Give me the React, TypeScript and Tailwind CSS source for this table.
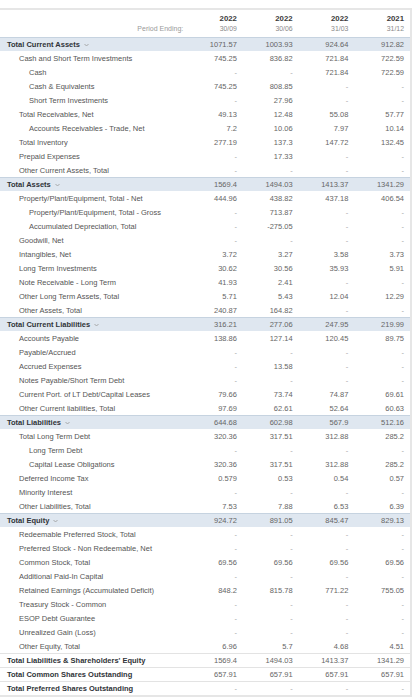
type Row = {
  label: string;
  level: number;
  kind: 'section' | 'item' | 'total';
  values: string[];
};

const D = ['-', '-', '-', '-'];

const rows: Row[] = [
  { label: 'Total Current Assets', level: 0, kind: 'section', values: ['1071.57', '1003.93', '924.64', '912.82'] },
  { label: 'Cash and Short Term Investments', level: 1, kind: 'item', values: ['745.25', '836.82', '721.84', '722.59'] },
  { label: 'Cash', level: 2, kind: 'item', values: ['-', '-', '721.84', '722.59'] },
  { label: 'Cash & Equivalents', level: 2, kind: 'item', values: ['745.25', '808.85', '-', '-'] },
  { label: 'Short Term Investments', level: 2, kind: 'item', values: ['-', '27.96', '-', '-'] },
  { label: 'Total Receivables, Net', level: 1, kind: 'item', values: ['49.13', '12.48', '55.08', '57.77'] },
  { label: 'Accounts Receivables - Trade, Net', level: 2, kind: 'item', values: ['7.2', '10.06', '7.97', '10.14'] },
  { label: 'Total Inventory', level: 1, kind: 'item', values: ['277.19', '137.3', '147.72', '132.45'] },
  { label: 'Prepaid Expenses', level: 1, kind: 'item', values: ['-', '17.33', '-', '-'] },
  { label: 'Other Current Assets, Total', level: 1, kind: 'item', values: D },
  { label: 'Total Assets', level: 0, kind: 'section', values: ['1569.4', '1494.03', '1413.37', '1341.29'] },
  { label: 'Property/Plant/Equipment, Total - Net', level: 1, kind: 'item', values: ['444.96', '438.82', '437.18', '406.54'] },
  { label: 'Property/Plant/Equipment, Total - Gross', level: 2, kind: 'item', values: ['-', '713.87', '-', '-'] },
  { label: 'Accumulated Depreciation, Total', level: 2, kind: 'item', values: ['-', '-275.05', '-', '-'] },
  { label: 'Goodwill, Net', level: 1, kind: 'item', values: D },
  { label: 'Intangibles, Net', level: 1, kind: 'item', values: ['3.72', '3.27', '3.58', '3.73'] },
  { label: 'Long Term Investments', level: 1, kind: 'item', values: ['30.62', '30.56', '35.93', '5.91'] },
  { label: 'Note Receivable - Long Term', level: 1, kind: 'item', values: ['41.93', '2.41', '-', '-'] },
  { label: 'Other Long Term Assets, Total', level: 1, kind: 'item', values: ['5.71', '5.43', '12.04', '12.29'] },
  { label: 'Other Assets, Total', level: 1, kind: 'item', values: ['240.87', '164.82', '-', '-'] },
  { label: 'Total Current Liabilities', level: 0, kind: 'section', values: ['316.21', '277.06', '247.95', '219.99'] },
  { label: 'Accounts Payable', level: 1, kind: 'item', values: ['138.86', '127.14', '120.45', '89.75'] },
  { label: 'Payable/Accrued', level: 1, kind: 'item', values: D },
  { label: 'Accrued Expenses', level: 1, kind: 'item', values: ['-', '13.58', '-', '-'] },
  { label: 'Notes Payable/Short Term Debt', level: 1, kind: 'item', values: D },
  { label: 'Current Port. of LT Debt/Capital Leases', level: 1, kind: 'item', values: ['79.66', '73.74', '74.87', '69.61'] },
  { label: 'Other Current liabilities, Total', level: 1, kind: 'item', values: ['97.69', '62.61', '52.64', '60.63'] },
  { label: 'Total Liabilities', level: 0, kind: 'section', values: ['644.68', '602.98', '567.9', '512.16'] },
  { label: 'Total Long Term Debt', level: 1, kind: 'item', values: ['320.36', '317.51', '312.88', '285.2'] },
  { label: 'Long Term Debt', level: 2, kind: 'item', values: D },
  { label: 'Capital Lease Obligations', level: 2, kind: 'item', values: ['320.36', '317.51', '312.88', '285.2'] },
  { label: 'Deferred Income Tax', level: 1, kind: 'item', values: ['0.579', '0.53', '0.54', '0.57'] },
  { label: 'Minority Interest', level: 1, kind: 'item', values: D },
  { label: 'Other Liabilities, Total', level: 1, kind: 'item', values: ['7.53', '7.88', '6.53', '6.39'] },
  { label: 'Total Equity', level: 0, kind: 'section', values: ['924.72', '891.05', '845.47', '829.13'] },
  { label: 'Redeemable Preferred Stock, Total', level: 1, kind: 'item', values: D },
  { label: 'Preferred Stock - Non Redeemable, Net', level: 1, kind: 'item', values: D },
  { label: 'Common Stock, Total', level: 1, kind: 'item', values: ['69.56', '69.56', '69.56', '69.56'] },
  { label: 'Additional Paid-In Capital', level: 1, kind: 'item', values: D },
  { label: 'Retained Earnings (Accumulated Deficit)', level: 1, kind: 'item', values: ['848.2', '815.78', '771.22', '755.05'] },
  { label: 'Treasury Stock - Common', level: 1, kind: 'item', values: D },
  { label: 'ESOP Debt Guarantee', level: 1, kind: 'item', values: D },
  { label: 'Unrealized Gain (Loss)', level: 1, kind: 'item', values: D },
  { label: 'Other Equity, Total', level: 1, kind: 'item', values: ['6.96', '5.7', '4.68', '4.51'] },
  { label: "Total Liabilities & Shareholders' Equity", level: 0, kind: 'total', values: ['1569.4', '1494.03', '1413.37', '1341.29'] },
  { label: 'Total Common Shares Outstanding', level: 0, kind: 'total', values: ['657.91', '657.91', '657.91', '657.91'] },
  { label: 'Total Preferred Shares Outstanding', level: 0, kind: 'total', values: D },
];

const periods = [
  { year: '2022', date: '30/09' },
  { year: '2022', date: '30/06' },
  { year: '2022', date: '31/03' },
  { year: '2021', date: '31/12' },
];

function Chevron() {
  return (
    <svg width="5" height="4" viewBox="0 0 5 4" className="ml-[4px] mt-[1px]">
      <polyline points="0.5,1 2.5,3 4.5,1" fill="none" stroke="#a0a0a0" strokeWidth="0.9" />
    </svg>
  );
}

export default function App() {
  return (
    <div className="bg-white h-[700px] pt-[8px] font-['Liberation_Sans',Arial,sans-serif]">
      <div className="w-[412px] border-t-2 border-r-2 border-b-2 border-[#e6e6e6]">
        {/* Header */}
        <div className="flex h-[27px] pt-[4px]">
          <div className="flex-1 flex flex-col items-end pr-[4px]">
            <div className="h-[10px]" />
            <div className="text-[7px] leading-[10px] text-[#9a9a9a]">Period Ending:</div>
          </div>
          {periods.map((p, i) => (
            <div key={i} className="w-[55.7px] flex flex-col items-end pr-[6px]">
              <div className="text-[7.8px] leading-[10px] font-bold text-[#3a3a3a]">{p.year}</div>
              <div className="text-[6.9px] leading-[10px] text-[#8a8a8a]">{p.date}</div>
            </div>
          ))}
        </div>

        {/* Rows */}
        {rows.map((r) => {
          const isSection = r.kind === 'section';
          const isTotal = r.kind === 'total';
          const rowCls = isSection
            ? 'bg-[#dfe7f0] border-t border-[#c6d3e0]'
            : isTotal
              ? 'border-t border-[#e3e3e3]'
              : '';
          const indent = r.level === 0 ? 'pl-[7px]' : r.level === 1 ? 'pl-[19px]' : 'pl-[29px]';
          const bold = isSection || isTotal;
          return (
            <div key={r.label} className={`flex h-[14px] items-center text-[7.5px] leading-[13px] ${rowCls}`}>
              <div className={`flex-1 flex items-center whitespace-nowrap ${indent}`}>
                <span className={bold ? 'font-bold text-[#2f3338]' : 'text-[#555]'}>{r.label}</span>
                {isSection && <Chevron />}
              </div>
              {r.values.map((v, i) => (
                <div
                  key={i}
                  className={`w-[55.7px] text-right pr-[6px] ${v === '-' ? 'text-[#a8a8a8]' : 'text-[#666]'}`}
                >
                  {v}
                </div>
              ))}
            </div>
          );
        })}
      </div>
    </div>
  );
}
